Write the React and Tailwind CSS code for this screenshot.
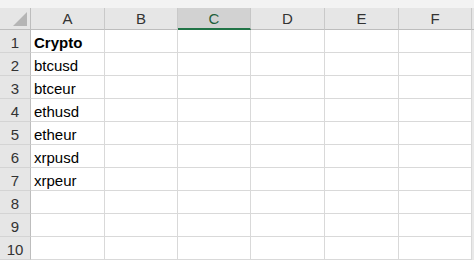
import React from "react";

const cols = ["A", "B", "C", "D", "E", "F"];
const data = ["Crypto", "btcusd", "btceur", "ethusd", "etheur", "xrpusd", "xrpeur", "", "", ""];

export default function App() {
  return (
    <div
      className="w-[474px] h-[260px] overflow-hidden bg-white"
      style={{ fontFamily: '"Liberation Sans", Arial, sans-serif' }}
    >
      <div className="h-[8px] bg-[#f3f3f3]" />
      <div className="grid grid-cols-[31px_74px_73px_73px_74px_74px_73px_1fr]">
        {/* header row */}
        <div className="h-[22px] bg-[#e6e6e6] border-r border-b border-[#bdbdbd] relative">
          <svg className="absolute left-[13px] top-[4px]" width="14" height="14" viewBox="0 0 14 14">
            <polygon points="14,0 14,14 0,14" fill="#b5b5b5" />
          </svg>
        </div>
        {cols.map((c) =>
          c === "C" ? (
            <div
              key={c}
              className="h-[22px] bg-[#d2d2d2] border-r border-[#c6c6c6] border-b-2 border-b-[#217346] flex items-center justify-center pt-[3px] text-[15px] text-[#1e5e3b]"
            >
              {c}
            </div>
          ) : (
            <div
              key={c}
              className="h-[22px] bg-[#e6e6e6] border-r border-b border-[#c9c9c9] border-b-[#bdbdbd] flex items-center justify-center pt-[2px] text-[15px] text-[#333]"
            >
              {c}
            </div>
          )
        )}
        <div className="h-[22px] bg-[#e6e6e6] border-b border-[#bdbdbd]" />

        {data.map((v, i) => (
          <React.Fragment key={i}>
            <div className="h-[23px] bg-[#e6e6e6] border-r border-b border-[#bdbdbd] border-b-[#d4d4d4] flex items-end justify-center pb-[1px] text-[15px] leading-[17px] text-[#333]">
              {i + 1}
            </div>
            <div
              className={`h-[23px] border-r border-b border-[#d9d9d9] flex items-end pb-[1px] pl-[3px] text-[15px] leading-[17px] text-black ${
                i === 0 ? "font-bold" : ""
              }`}
            >
              {v}
            </div>
            {cols.slice(1).map((c) => (
              <div key={c} className="h-[23px] border-r border-b border-[#d9d9d9]" />
            ))}
            <div className="h-[23px] bg-[#e9e9e9]" />
          </React.Fragment>
        ))}
      </div>
    </div>
  );
}
